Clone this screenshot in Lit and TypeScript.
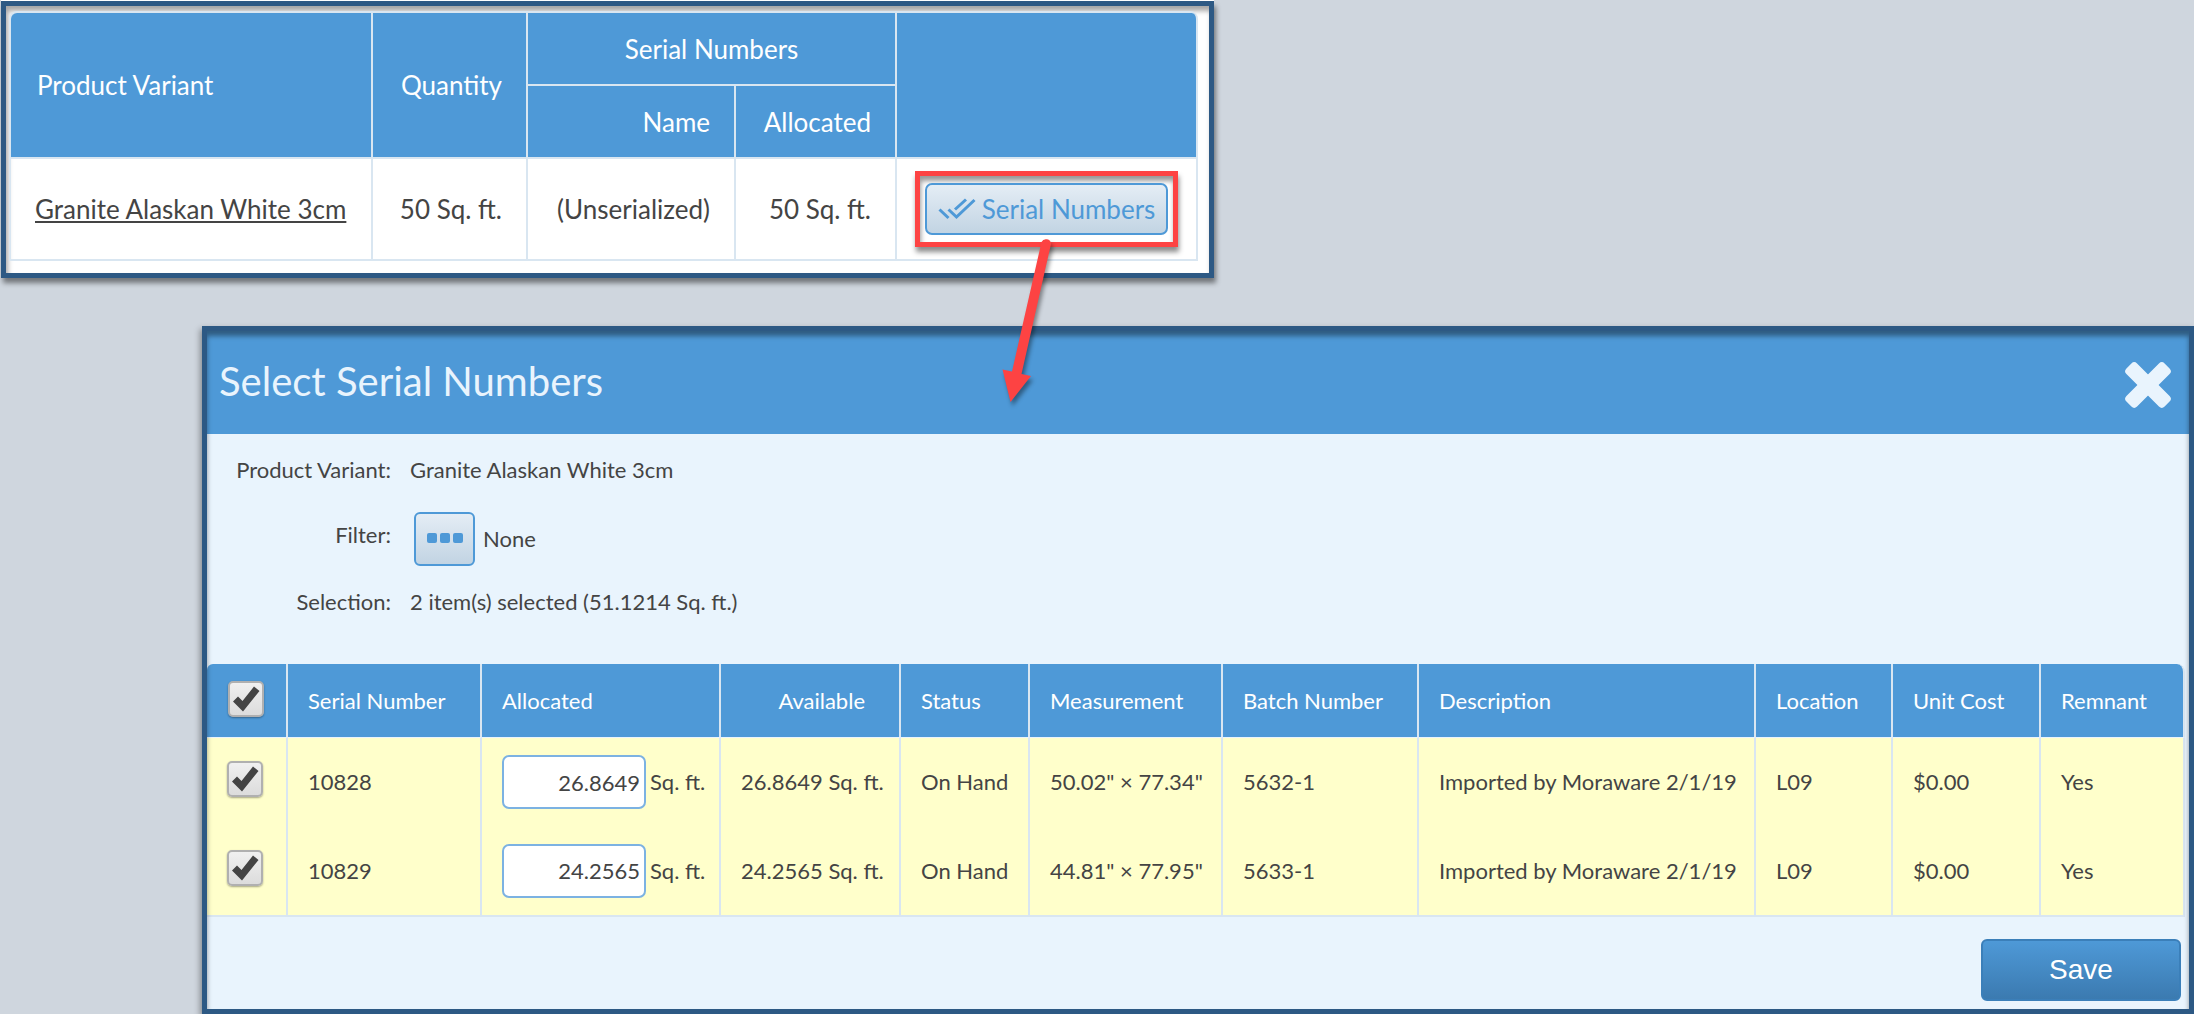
import { LitElement, html, css, svg } from "lit";
import { customElement } from "lit/decorators.js";

interface SerialRow {
  serial: string;
  allocated: string;
  measurement: string;
  batch: string;
}

const ROWS: SerialRow[] = [
  { serial: "10828", allocated: "26.8649", measurement: '50.02" × 77.34"', batch: "5632-1" },
  { serial: "10829", allocated: "24.2565", measurement: '44.81" × 77.95"', batch: "5633-1" },
];

const shared = css`
  *,
  *::before {
    box-sizing: border-box;
  }
  table {
    border-collapse: separate;
    border-spacing: 0;
    table-layout: fixed;
    width: 100%;
  }
  th {
    background: #4e99d7;
    color: #fff;
    font-weight: 400;
    text-align: left;
  }
  th,
  td {
    padding: 0;
    white-space: nowrap;
    border-right: 2px solid #d9e6f1;
    border-bottom: 2px solid #d9e6f1;
  }
  button {
    font: inherit;
    margin: 0;
    padding: 0;
    cursor: pointer;
  }
  .light-button {
    display: inline-flex;
    align-items: center;
    justify-content: center;
    border: 2px solid #4e99d7;
    border-radius: 7px;
    background: linear-gradient(#e4edf5, #c2d4e3);
    color: #4e99d7;
  }
`;

@customElement("allocation-panel")
export class AllocationPanel extends LitElement {
  static styles = [
    shared,
    css`
      :host {
        display: block;
        border: 5px solid #2d5984;
        background: #fff;
        padding: 5px 11px 12px 3px;
        box-shadow: 0 -1px 0 #fff, 2px 5px 5px rgba(0, 0, 0, 0.45), inset 2px 5px 5px rgba(0, 0, 0, 0.35);
        font-size: 26px;
        line-height: 32px;
      }
      .grid {
        border-left: 2px solid #d9e6f1;
        border-top: 2px solid #d9e6f1;
        border-radius: 8px 8px 0 0;
      }
      th,
      td {
        padding: 0 24px;
      }
      .variant {
        padding-left: 26px;
        border-top-left-radius: 6px;
      }
      .blank {
        border-top-right-radius: 6px;
      }
      .head {
        height: 73px;
      }
      .body {
        height: 102px;
      }
      .center {
        text-align: center;
      }
      .end {
        text-align: right;
      }
      a {
        color: #444;
        text-decoration-thickness: 2px;
        text-underline-offset: 2px;
      }
      .action {
        padding: 0 18px;
      }
      .callout {
        display: flex;
        border: 5px solid #fd4343;
        padding: 7px 5px;
        box-shadow: 1px 5px 5px rgba(0, 0, 0, 0.45), inset 1px 5px 5px rgba(0, 0, 0, 0.4);
      }
      .callout button {
        flex: 1;
        height: 52px;
        gap: 6px;
      }
      .c1 { width: 362px; }
      .c2 { width: 155px; }
      .c3 { width: 208px; }
      .c4 { width: 161px; }
    `,
  ];

  render() {
    return html`
      <table class="grid">
        <colgroup>
          <col class="c1" /><col class="c2" /><col class="c3" /><col class="c4" /><col />
        </colgroup>
        <thead>
          <tr class="head">
            <th rowspan="2" class="variant">Product Variant</th>
            <th rowspan="2" class="end">Quantity</th>
            <th colspan="2" class="center">Serial Numbers</th>
            <th rowspan="2" class="blank"></th>
          </tr>
          <tr class="head">
            <th class="end">Name</th>
            <th class="end">Allocated</th>
          </tr>
        </thead>
        <tbody>
          <tr class="body">
            <td><a href="#variant">Granite Alaskan White 3cm</a></td>
            <td class="end">50 Sq. ft.</td>
            <td class="end">(Unserialized)</td>
            <td class="end">50 Sq. ft.</td>
            <td class="action">
              <div class="callout">
                <button type="button" class="light-button">
                  <svg width="38" height="24" viewBox="0 0 38 24" fill="none" stroke="currentColor" stroke-width="3">
                    <path d="M1.500 12.500l9 8.500M10.500 12.500l8 7.500L36.500 3M17 12.500L28 2.500" />
                  </svg>
                  Serial Numbers
                </button>
              </div>
            </td>
          </tr>
        </tbody>
      </table>
    `;
  }
}

@customElement("serial-dialog")
export class SerialDialog extends LitElement {
  static styles = [
    shared,
    css`
      :host {
        display: flex;
        flex-direction: column;
        position: relative;
        border: 5px solid #2d5984;
        background: #e9f4fd;
        box-shadow: -2px 3px 6px rgba(0, 0, 0, 0.35);
        font-size: 22px;
        line-height: 28px;
      }
      /* Inner shade that falls over the bar and the table edge. */
      :host::after {
        content: "";
        position: absolute;
        inset: 0;
        pointer-events: none;
        box-shadow: inset 0 5px 5px rgba(0, 0, 0, 0.4);
      }
      .bar {
        display: flex;
        align-items: center;
        justify-content: space-between;
        height: 103px;
        padding: 0 18px 0 12px;
        background: #4e99d7;
        color: #e9f4fd;
      }
      h1 {
        margin: 0;
        padding-bottom: 4px;
        font-size: 40px;
        line-height: 48px;
        font-weight: 400;
      }
      .close {
        display: flex;
        border: 0;
        padding-top: 4px;
        background: none;
        color: inherit;
      }
      .form {
        display: grid;
        grid-template-columns: 184px 1fr;
        grid-template-rows: 72px 64px 64px;
        column-gap: 19px;
        align-items: center;
        height: 230px;
      }
      .label {
        text-align: right;
      }
      .filter-label {
        padding-bottom: 6px;
      }
      .filter {
        display: flex;
        align-items: center;
        gap: 8px;
        padding: 2px 0 0 4px;
      }
      .filter button {
        width: 61px;
        height: 54px;
        padding-bottom: 3px;
        border-radius: 6px;
      }
      .table-wrap {
        padding-right: 4px;
      }
      th {
        height: 74px;
        border-bottom-width: 1px;
        border-bottom-color: #e9f4fd;
      }
      td {
        height: 88px;
        background: #ffffcb;
        border-bottom: 0;
      }
      tr:last-child td {
        height: 91px;
        border-bottom: 2px solid #d9e6f1;
      }
      th,
      td {
        padding: 0 16px 0 20px;
      }
      th:first-child {
        border-top-left-radius: 6px;
        padding: 0 0 4px 21px;
      }
      td:first-child {
        padding-bottom: 6px;
      }
      th:last-child {
        border-top-right-radius: 8px;
      }
      .end {
        text-align: right;
        padding: 0 20px;
      }
      th.end {
        padding-right: 34px;
      }
      .amount {
        display: flex;
        align-items: center;
        gap: 4px;
      }
      .amount input {
        width: 144px;
        height: 54px;
        border: 2px solid #7cb2e2;
        border-radius: 7px;
        padding: 0 4px;
        margin: 0;
        background: #fff;
        font: inherit;
        color: #444;
        text-align: right;
      }
      .check {
        display: block;
        position: relative;
        width: 36px;
        height: 36px;
      }
      .check input {
        appearance: none;
        display: block;
        width: 36px;
        height: 36px;
        margin: 0;
        border: 2px solid #b0b0b0;
        border-radius: 5px;
        background: linear-gradient(#f0f0f0, #dcdcdc);
        box-shadow: 0 1px 2px rgba(0, 0, 0, 0.35);
      }
      .check svg {
        position: absolute;
        inset: 0;
        pointer-events: none;
      }
      .actions {
        display: flex;
        justify-content: flex-end;
        padding: 22px 8px 8px;
      }
      .save {
        width: 200px;
        height: 62px;
        border: 2px solid #3b7fb9;
        border-radius: 6px;
        background: linear-gradient(#4e99d7, #3b7ab0);
        color: #fff;
        font-family: "Liberation Sans", Arial, sans-serif;
        font-size: 28px;
      }
      .c0 { width: 81px; }
      .c1 { width: 194px; }
      .c2 { width: 239px; }
      .c3 { width: 180px; }
      .c4 { width: 129px; }
      .c5 { width: 193px; }
      .c6 { width: 196px; }
      .c8 { width: 137px; }
      .c9 { width: 148px; }
      .c10 { width: 144px; }
    `,
  ];

  private check(label: string) {
    return html`<label class="check">
      <input type="checkbox" checked aria-label=${label} />
      ${svg`<svg width="36" height="36" viewBox="0 0 36 36"><path fill="#444" d="M5 20.500l5-5 4.500 4.500L26 5.500l5.500 4.500L15 30.500z" /></svg>`}
    </label>`;
  }

  render() {
    return html`
      <header class="bar">
        <h1>Select Serial Numbers</h1>
        <button type="button" class="close" aria-label="Close">
          <svg width="46" height="46" viewBox="0 0 46 46" fill="currentColor">
            <g transform="rotate(45 23 23)">
              <rect x="-4" y="15.500" width="54" height="15" rx="4" />
              <rect x="15.500" y="-4" width="15" height="54" rx="4" />
            </g>
          </svg>
        </button>
      </header>
      <section class="form">
        <div class="label">Product Variant:</div>
        <div>Granite Alaskan White 3cm</div>
        <div class="label filter-label">Filter:</div>
        <div class="filter">
          <button type="button" class="light-button" aria-label="Choose filter">
            <svg width="36" height="10" viewBox="0 0 36 10" fill="currentColor">
              <rect width="10" height="10" rx="2" />
              <rect x="13" width="10" height="10" rx="2" />
              <rect x="26" width="10" height="10" rx="2" />
            </svg>
          </button>
          <span>None</span>
        </div>
        <div class="label">Selection:</div>
        <div>2 item(s) selected (51.1214 Sq. ft.)</div>
      </section>
      <div class="table-wrap">
        <table>
          <colgroup>
            <col class="c0" /><col class="c1" /><col class="c2" /><col class="c3" /><col class="c4" />
            <col class="c5" /><col class="c6" /><col /><col class="c8" /><col class="c9" /><col class="c10" />
          </colgroup>
          <thead>
            <tr>
              <th>${this.check("Select all")}</th>
              <th>Serial Number</th>
              <th>Allocated</th>
              <th class="end">Available</th>
              <th>Status</th>
              <th>Measurement</th>
              <th>Batch Number</th>
              <th>Description</th>
              <th>Location</th>
              <th>Unit Cost</th>
              <th>Remnant</th>
            </tr>
          </thead>
          <tbody>
            ${ROWS.map(
              (r) => html`<tr>
                <td>${this.check(`Select ${r.serial}`)}</td>
                <td>${r.serial}</td>
                <td>
                  <label class="amount"><input type="text" .value=${r.allocated} />Sq. ft.</label>
                </td>
                <td class="end">${r.allocated} Sq. ft.</td>
                <td>On Hand</td>
                <td>${r.measurement}</td>
                <td>${r.batch}</td>
                <td>Imported by Moraware 2/1/19</td>
                <td>L09</td>
                <td>$0.00</td>
                <td>Yes</td>
              </tr>`,
            )}
          </tbody>
        </table>
      </div>
      <footer class="actions"><button type="button" class="save">Save</button></footer>
    `;
  }
}

@customElement("app-root")
export class AppRoot extends LitElement {
  static styles = css`
    * {
      box-sizing: border-box;
    }
    :host {
      display: block;
      position: relative;
      min-height: 100vh;
      background: #cfd6de;
      color: #444;
      font-family: Lato, "Liberation Sans", sans-serif;
    }
    .page {
      display: flex;
      flex-direction: column;
      gap: 48px;
      padding-top: 1px;
    }
    .top {
      width: 1213px;
      margin-left: 1px;
    }
    .dialog {
      margin-left: 202px;
    }
    .arrow {
      position: absolute;
      left: 990px;
      top: 230px;
      pointer-events: none;
      filter: drop-shadow(2px 4px 2px rgba(0, 0, 0, 0.4));
    }
  `;

  render() {
    return html`
      <main class="page">
        <allocation-panel class="top"></allocation-panel>
        <serial-dialog class="dialog"></serial-dialog>
      </main>
      <svg class="arrow" width="80" height="190" viewBox="0 0 80 190" fill="#fd4343">
        <path d="M51.500 12a5 5 0 0 1 9.500 2L31.500 144l9.500 2L20.500 172L12.500 139.500l9.500 2z" />
      </svg>
    `;
  }
}
